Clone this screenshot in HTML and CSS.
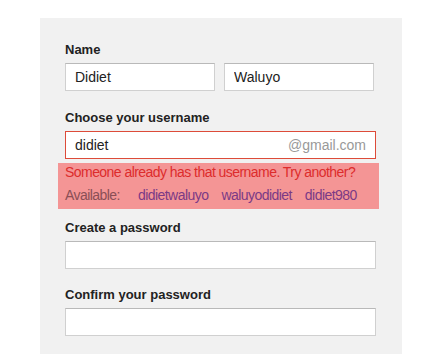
FILE: index.html
```html
<!DOCTYPE html>
<html lang="en">
<head>
    <meta charset="UTF-8">
    <meta name="viewport" content="width=device-width, initial-scale=1.0">
    <title>Create your Google Account</title>
    <link rel="stylesheet" href="styles.css">
</head>
<body>
    <div class="signup-panel">
        <div class="field">
            <label class="field-label">Name</label>
            <div class="name-row">
                <input class="text-input" type="text" value="Didiet">
                <input class="text-input" type="text" value="Waluyo">
            </div>
        </div>

        <div class="field">
            <label class="field-label">Choose your username</label>
            <div class="text-input username error">
                <input type="text" value="didiet">
                <span class="suffix">@gmail.com</span>
            </div>
            <div class="error-box">
                <p class="error-msg">Someone already has that username. Try another?</p>
                <p class="suggestions">
                    <span class="avail">Available:</span>
                    <a href="#">didietwaluyo</a>
                    <a href="#">waluyodidiet</a>
                    <a href="#">didiet980</a>
                </p>
            </div>
        </div>

        <div class="field pw">
            <label class="field-label">Create a password</label>
            <input class="text-input" type="password">
        </div>

        <div class="field">
            <label class="field-label">Confirm your password</label>
            <input class="text-input" type="password">
        </div>
    </div>
</body>
</html>
```

FILE: styles.css
```css
body {
    font-family: 'Liberation Sans', Arial, sans-serif;
    background-color: #fff;
    margin: 0;
    padding: 18px 0 0 40px;
    color: #222;
    overflow: hidden;
}
.signup-panel {
    box-sizing: border-box;
    width: 362px;
    height: 336px;
    background-color: #f1f1f1;
    padding: 24px 26px 0 25px;
}
.field {
    display: flex;
    flex-direction: column;
    margin-bottom: 19px;
}
.field.pw {
    margin-top: -8px;
    margin-bottom: 18px;
}
.field-label {
    font-size: 13px;
    font-weight: bold;
    line-height: 15px;
    margin-bottom: 6px;
}
.name-row {
    display: flex;
    gap: 9px;
}
.name-row .text-input {
    width: 150px;
}
.text-input {
    box-sizing: border-box;
    height: 28px;
    border: 1px solid #d0d0d0;
    border-top-color: #b9b9b9;
    background-color: #fff;
    padding: 0 9px;
    font-family: inherit;
    font-size: 14px;
    color: #222;
    outline: none;
    margin: 0;
}
.username {
    display: flex;
    align-items: center;
    width: 311px;
}
.username input {
    flex-grow: 1;
    min-width: 0;
    border: none;
    padding: 0;
    font-family: inherit;
    font-size: 14px;
    color: #222;
    outline: none;
    background: transparent;
}
.username .suffix {
    color: #999;
    font-size: 14px;
}
.text-input.error {
    border-color: #dd4b39;
}
.error-box {
    margin: 4px -3px 0 -7px;
    padding: 0 0 5px 7px;
    background-color: #f49595;
    font-size: 14px;
    line-height: 18px;
    letter-spacing: -0.55px;
}
.error-box p {
    margin: 0;
    white-space: nowrap;
}
.error-msg {
    color: #dd2c2c;
}
.suggestions {
    margin-top: 5px !important;
    display: flex;
    gap: 13px;
}
.avail {
    color: #8a4f55;
    margin-right: 5px;
}
.suggestions a {
    color: #7b3a86;
    text-decoration: none;
}
```
